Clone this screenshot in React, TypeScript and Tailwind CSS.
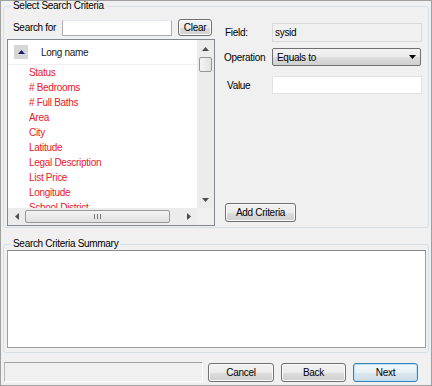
import React from "react";

const items = [
  "Status",
  "# Bedrooms",
  "# Full Baths",
  "Area",
  "City",
  "Latitude",
  "Legal Description",
  "List Price",
  "Longitude",
  "School District",
];

const btn =
  "rounded-[3px] border border-[#707070] bg-[linear-gradient(#f2f2f2_0%,#ebebeb_50%,#dddddd_51%,#cfcfcf_100%)] shadow-[inset_0_0_0_1px_#fbfbfb] flex items-center justify-center text-black";

// small scrollbar arrow glyph
const Arrow: React.FC<{ dir: "up" | "down" | "left" | "right" }> = ({ dir }) => {
  const pts = {
    up: "0,4 7,4 3.5,0",
    down: "0,0 7,0 3.5,4",
    left: "4,0 4,7 0,3.5",
    right: "0,0 0,7 4,3.5",
  }[dir];
  const horiz = dir === "up" || dir === "down";
  return (
    <svg width={horiz ? 7 : 4} height={horiz ? 4 : 7} viewBox={horiz ? "0 0 7 4" : "0 0 4 7"}>
      <polygon points={pts} fill="#4d4d4d" />
    </svg>
  );
};

const GroupBox: React.FC<{ title: string; className: string; children: React.ReactNode }> = ({
  title,
  className,
  children,
}) => (
  <div className={`relative border border-[#d5dfe5] rounded-[3px] ${className}`}>
    <span className="absolute -top-[7px] left-[7px] bg-[#f0f0f0] px-[2px] leading-[12px]">{title}</span>
    {children}
  </div>
);

export default function App() {
  return (
    <div className="w-[432px] h-[386px] bg-[#f0f0f0] border border-[#a0a0a0] flex flex-col font-['Liberation_Sans',Arial,sans-serif] text-[10px] tracking-[-0.3px] text-black overflow-hidden">
      <GroupBox title="Select Search Criteria" className="mt-[5px] mx-[2px] h-[222px] flex">
        {/* left: search + list */}
        <div className="ml-[3px] w-[209px] flex flex-col pt-[12px]">
          <div className="flex items-center h-[17px]">
            <span className="w-[55px] pl-[6px]">Search for</span>
            <div className="w-[110px] h-[16px] bg-white border border-[#abadb3] border-t-[#e3e9ef]" />
            <div className={`${btn} ml-[6px] w-[34px] h-[17px]`}>Clear</div>
          </div>
          <div className="mt-[3px] w-[208px] h-[187px] border border-[#828790] bg-white flex flex-col">
            <div className="flex h-[168px]">
              <div className="flex-1 overflow-hidden">
                <div className="h-[25px] flex items-center border-b border-[#f0f0f0]">
                  <div className="ml-[6px] w-[14px] h-[14px] bg-[#d6d6d6] flex items-center justify-center">
                    <svg width="7" height="4" viewBox="0 0 7 4">
                      <polygon points="0,4 7,4 3.5,0" fill="#1e1e78" />
                    </svg>
                  </div>
                  <span className="ml-[13px] text-[#1a1a1a]">Long name</span>
                </div>
                {items.map((it) => (
                  <div key={it} className="h-[15px] leading-[15px] pl-[21px] text-[#e4202c] whitespace-nowrap">
                    {it}
                  </div>
                ))}
              </div>
              <div className="w-[17px] bg-[#ececec] flex flex-col items-center">
                <div className="h-[17px] w-full flex items-center justify-center">
                  <Arrow dir="up" />
                </div>
                <div className="w-[13px] h-[15px] rounded-[2px] border border-[#979797] bg-[linear-gradient(90deg,#f4f4f4,#e2e2e2)]" />
                <div className="flex-1" />
                <div className="h-[17px] w-full flex items-center justify-center">
                  <Arrow dir="down" />
                </div>
              </div>
            </div>
            <div className="h-[17px] flex bg-[#ececec]">
              <div className="w-[17px] flex items-center justify-center">
                <Arrow dir="left" />
              </div>
              <div className="my-[2px] w-[145px] rounded-[2px] border border-[#979797] bg-[linear-gradient(#f4f4f4,#e0e0e0)] flex items-center justify-center gap-[2px]">
                <div className="w-px h-[5px] bg-[#777]" />
                <div className="w-px h-[5px] bg-[#777]" />
                <div className="w-px h-[5px] bg-[#777]" />
              </div>
              <div className="flex-1" />
              <div className="w-[17px] flex items-center justify-center">
                <Arrow dir="right" />
              </div>
              <div className="w-[17px] bg-[#f0f0f0]" />
            </div>
          </div>
        </div>
        {/* right: criteria editor */}
        <div className="flex-1 pl-[8px] pr-[5px] pt-[16px] pb-[5px] flex flex-col">
          <div className="flex items-center h-[19px]">
            <span className="w-[48px] pl-[1px]">Field:</span>
            <div className="w-[150px] h-[19px] bg-[#f0f0f0] border border-[#d9d9d9] flex items-center pl-[2px]">sysid</div>
          </div>
          <div className="flex items-center h-[18px] mt-[6px]">
            <span className="w-[48px]">Operation</span>
            <div className="w-[149px] h-[18px] rounded-[2px] border border-[#707070] bg-[linear-gradient(#f2f2f2_0%,#ebebeb_50%,#dddddd_51%,#cfcfcf_100%)] flex items-center pl-[4px] pr-[4px]">
              <span className="flex-1">Equals to</span>
              <svg width="7" height="4" viewBox="0 0 7 4">
                <polygon points="0,0 7,0 3.5,4" fill="#000" />
              </svg>
            </div>
          </div>
          <div className="flex items-center h-[18px] mt-[10px]">
            <span className="w-[48px] pl-[3px]">Value</span>
            <div className="w-[150px] h-[18px] bg-white border border-[#e3e3e3]" />
          </div>
          <div className="flex-1" />
          <div className={`${btn} ml-[1px] w-[71px] h-[19px]`}>Add Criteria</div>
        </div>
      </GroupBox>

      <GroupBox title="Search Criteria Summary" className="mt-[16px] mx-[2px] h-[109px] pt-[5px]">
        <div className="ml-[3px] w-[419px] h-[98px] bg-white border border-[#a0a0a0] border-t-[#8a8a8a]" />
      </GroupBox>

      <div className="mt-[9px] flex items-center">
        <div className="ml-[3px] w-[199px] h-[20px] border border-[#b8b8b8] border-t-[#a0a0a0] border-r-[#ffffff] border-b-[#ffffff]" />
        <div className={`${btn} ml-[5px] w-[66px] h-[19px]`}>Cancel</div>
        <div className={`${btn} ml-[7px] w-[65px] h-[19px]`}>Back</div>
        <div className="ml-[7px] w-[65px] h-[19px] rounded-[3px] border border-[#3c7fb1] bg-[linear-gradient(#f2f7fa_0%,#e9f1f6_50%,#dbe6ee_51%,#cfdde8_100%)] shadow-[inset_0_0_0_1px_#b8e0f8] flex items-center justify-center">
          Next
        </div>
      </div>
    </div>
  );
}
